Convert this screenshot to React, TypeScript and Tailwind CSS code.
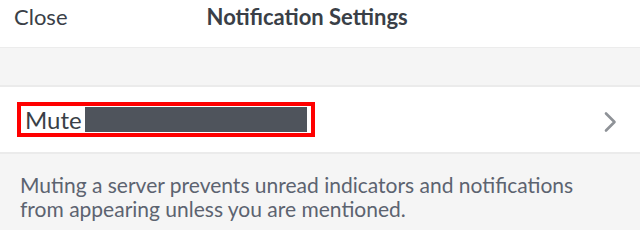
import React from "react";

export default function App() {
  return (
    <div className="w-[640px] h-[230px] overflow-hidden bg-[#f5f5f5]" style={{ fontFamily: "Lato, 'Noto Sans', sans-serif" }}>
      <div className="h-[48px] bg-white flex items-start pt-[5px] border-b border-[#ececec]">
        <span className="ml-[14px] text-[22px] text-[#3a3f47] leading-[24px]">Close</span>
        <span className="ml-[139px] text-[22px] font-bold text-[#3a3f47] leading-[24px]">Notification Settings</span>
      </div>
      <div className="h-[37px]" />
      <div className="h-[69px] bg-white border-y-2 border-[#ebebeb] flex items-center">
        <div className="ml-[17px] w-[298px] h-[35px] border-[4px] border-[#ff0000] flex items-center pl-[4px] pr-[4px]">
          <span className="text-[24px] text-[#3a3f47] leading-none">Mute</span>
          <div className="ml-[3px] flex-1 h-[25px] bg-[#4f545c]" />
        </div>
        <div className="flex-1" />
        <svg className="mr-[23px] mt-[4px]" width="14" height="22" viewBox="0 0 14 22" fill="none">
          <path d="M3 2.5 L11.5 11 L3 19.5" stroke="#8e9297" strokeWidth="2.6" strokeLinecap="round" strokeLinejoin="round" />
        </svg>
      </div>
      <div className="px-[20px] pt-[19px] text-[21px] leading-[24px] text-[#5c6370]">
        Muting a server prevents unread indicators and notifications from appearing unless you are mentioned.
      </div>
    </div>
  );
}
